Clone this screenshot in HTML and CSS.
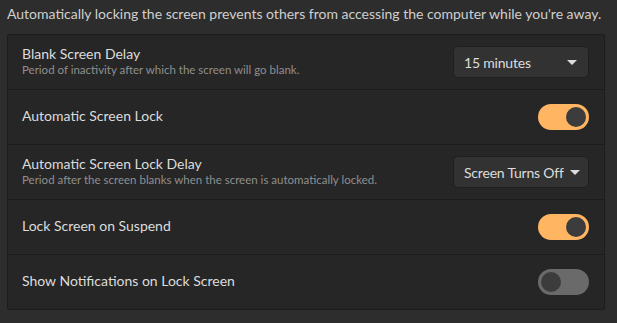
FILE: index.html
```html
<!DOCTYPE html>
<html lang="en">
<head>
  <meta charset="UTF-8" />
  <title>Screen Lock</title>
  <link rel="stylesheet" href="styles.css">
</head>
<body>
  <p class="intro">Automatically locking the screen prevents others from accessing the computer while you're away.</p>

  <div class="panel">
    <div class="row">
      <div class="text">
        <div class="title">Blank Screen Delay</div>
        <div class="subtitle">Period of inactivity after which the screen will go blank.</div>
      </div>
      <button class="dropdown"><span>15 minutes</span><span class="arrow"></span></button>
    </div>

    <div class="row">
      <div class="text">
        <div class="title">Automatic Screen Lock</div>
      </div>
      <div class="switch on"><span class="knob"></span></div>
    </div>

    <div class="row">
      <div class="text">
        <div class="title">Automatic Screen Lock Delay</div>
        <div class="subtitle">Period after the screen blanks when the screen is automatically locked.</div>
      </div>
      <button class="dropdown"><span>Screen Turns Off</span><span class="arrow"></span></button>
    </div>

    <div class="row">
      <div class="text">
        <div class="title">Lock Screen on Suspend</div>
      </div>
      <div class="switch on"><span class="knob"></span></div>
    </div>

    <div class="row">
      <div class="text">
        <div class="title">Show Notifications on Lock Screen</div>
      </div>
      <div class="switch"><span class="knob"></span></div>
    </div>
  </div>
</body>
</html>
```

FILE: styles.css
```css
body {
  margin: 0;
  background-color: #2d2d2d;
  font-family: Lato, "Open Sans", sans-serif;
  color: #dadada;
  padding: 0 12px 0 7px;
}

.intro {
  margin: 0;
  padding: 5px 0 0 0;
  height: 34px;
  box-sizing: border-box;
  font-size: 14px;
  color: #cfcfcf;
}

.panel {
  background-color: #262626;
  border: 1px solid #1c1c1c;
  border-radius: 2px;
}

.row {
  display: flex;
  align-items: center;
  justify-content: space-between;
  height: 54px;
  padding: 0 15px 0 14px;
  border-bottom: 1px solid #1c1c1c;
}

.row:last-child {
  border-bottom: none;
}

.text {
  margin-top: -3px;
}

.title {
  font-size: 14px;
  color: #dcdcdc;
}

.subtitle {
  font-size: 11.5px;
  color: #8f8f8f;
  margin-top: 1px;
}

.dropdown {
  display: flex;
  align-items: center;
  justify-content: space-between;
  gap: 6px;
  white-space: nowrap;
  width: 136px;
  height: 32px;
  padding: 0 11px 0 10px;
  background-color: #323232;
  border: 1px solid #1f1f1f;
  border-radius: 5px;
  font-family: inherit;
  font-size: 14px;
  letter-spacing: -0.2px;
  color: #dcdcdc;
}

.arrow {
  flex: none;
  width: 0;
  height: 0;
  border-left: 5px solid transparent;
  border-right: 5px solid transparent;
  border-top: 5px solid #dcdcdc;
}

.switch {
  width: 51px;
  height: 26px;
  border-radius: 13px;
  background-color: #6a6a6a;
  box-sizing: border-box;
  padding: 3px;
  display: flex;
}

.switch.on {
  background-color: #ffb562;
  justify-content: flex-end;
}

.knob {
  width: 20px;
  height: 20px;
  border-radius: 50%;
  background-color: #3c3c3c;
}
```
